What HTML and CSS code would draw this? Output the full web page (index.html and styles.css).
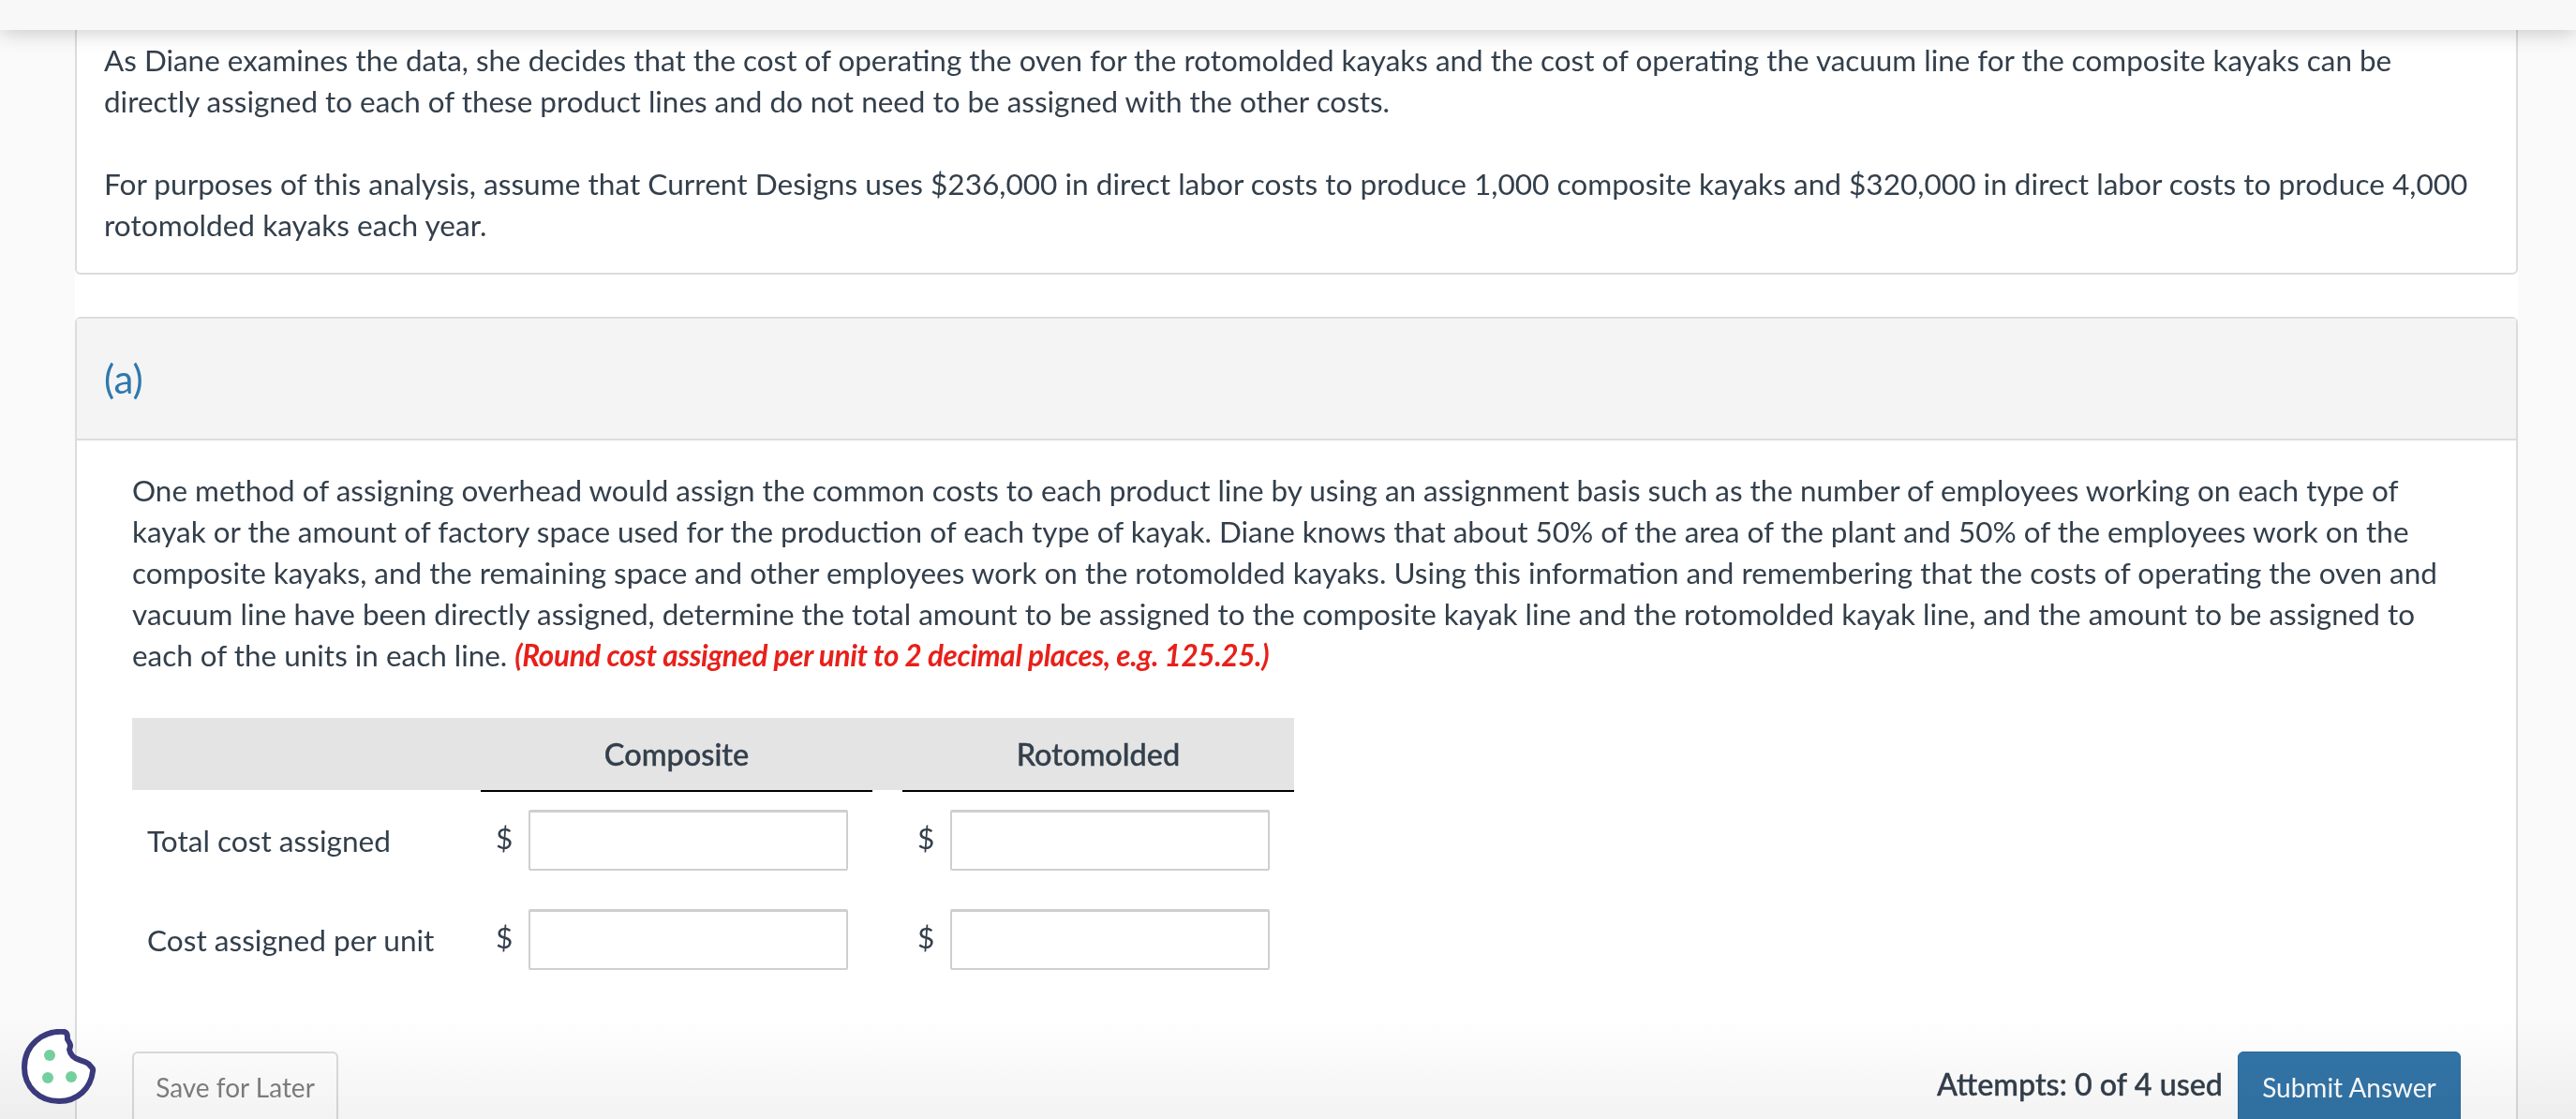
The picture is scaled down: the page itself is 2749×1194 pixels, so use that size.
FILE: index.html
```html
<!DOCTYPE html>
<html lang="en">
<head>
<meta charset="utf-8">
<title>Question</title>
<link rel="stylesheet" href="styles.css">
</head>
<body>
<header class="topbar"></header>
<main class="page">
  <section class="card intro">
    <p class="tight">As Diane examines the data, she decides that the cost of operating the oven for the rotomolded kayaks and the cost of operating the vacuum line for the composite kayaks can be directly assigned to each of these product lines and do not need to be assigned with the other costs.</p>
    <p>For purposes of this analysis, assume that Current Designs uses $236,000 in direct labor costs to produce 1,000 composite kayaks and $320,000 in direct labor costs to produce 4,000 rotomolded kayaks each year.</p>
  </section>
  <section class="card part">
    <div class="part-head"><h2>(a)</h2></div>
    <div class="part-body">
      <p class="prompt">One method of assigning overhead would assign the common costs to each product line by using an assignment basis such as the number of employees working on each type of kayak or the amount of factory space used for the production of each type of kayak. Diane knows that about 50% of the area of the plant and 50% of the employees work on the composite kayaks, and the remaining space and other employees work on the rotomolded kayaks. Using this information and remembering that the costs of operating the oven and vacuum line have been directly assigned, determine the total amount to be assigned to the composite kayak line and the rotomolded kayak line, and the amount to be assigned to each of the units in each line. <em class="hint">(Round cost assigned per unit to 2 decimal places, e.g. 125.25.)</em></p>
      <div class="grid">
        <div class="th th-blank"></div>
        <div class="th th-col">Composite</div>
        <div class="th th-gap"></div>
        <div class="th th-col">Rotomolded</div>
        <div class="row-label">Total cost assigned</div>
        <div class="money"><span class="cur">$</span><input class="field" type="text" aria-label="Total cost assigned, composite"></div>
        <div></div>
        <div class="money"><span class="cur">$</span><input class="field" type="text" aria-label="Total cost assigned, rotomolded"></div>
        <div class="row-label">Cost assigned per unit</div>
        <div class="money"><span class="cur">$</span><input class="field" type="text" aria-label="Cost assigned per unit, composite"></div>
        <div></div>
        <div class="money"><span class="cur">$</span><input class="field" type="text" aria-label="Cost assigned per unit, rotomolded"></div>
      </div>
      <div class="actions">
        <button class="btn btn-save" type="button">Save for Later</button>
        <div class="submit-group">
          <span class="attempts">Attempts: 0 of 4 used</span>
          <button class="btn btn-submit" type="button">Submit Answer</button>
        </div>
      </div>
    </div>
  </section>
</main>
<div class="fade"></div>
<svg class="cookie" viewBox="0 0 80 80" width="80" height="80" aria-hidden="true">
  <path d="M46 3 C23 1 3 17 3 41 C3 62 19 77 40 77 C60 77 74 63 76 45 C77 42 75 41 73 39 C71 35 67 35 62 33 C55 31 52 27 51 22 C53 17 52 16 49 11 C49 7 49 4 46 3 Z" fill="#fff" stroke="#3a3a7c" stroke-width="6" stroke-linejoin="round"/>
  <circle cx="30" cy="28" r="6" fill="#74cf9e"/>
  <circle cx="28" cy="52" r="6" fill="#74cf9e"/>
  <circle cx="53" cy="51" r="6" fill="#74cf9e"/>
</svg>
</body>
</html>
```
FILE: styles.css
```css
* { box-sizing: border-box; }
html, body { margin: 0; height: 1194px; overflow: hidden; }
body {
  background: #fafafa;
  font-family: Lato, "Open Sans", sans-serif;
  font-size: 31.6px;
  line-height: 44px;
  color: #333f4b;
  position: relative;
}
.topbar {
  height: 32px;
  background: #f8f8f8;
  box-shadow: 0 3px 22px rgba(0,0,0,.2);
  position: relative;
  z-index: 2;
}
.page {
  margin-left: 80px;
  width: 2607px;
  background: #fff;
}
.card {
  width: 2607px;
  border: 2px solid #dcdcdc;
  border-radius: 6px;
  background: #fff;
}
.intro {
  border-top: 0;
  border-radius: 0 0 6px 6px;
  padding: 10px 29px 31px;
  height: 261px;
}
.intro p { margin: 0 0 44px; }
.intro p:last-child { margin: 0; }
.intro .tight { font-size: 31.42px; }
.part { margin-top: 45px; }
.part-head {
  height: 130px;
  background: #f4f4f4;
  border-bottom: 2px solid #dcdcdc;
  display: flex;
  align-items: center;
  padding: 0 29px;
}
.part-head h2 {
  margin: 0;
  font-size: 42px;
  font-weight: 400;
  color: #2f78ad;
}
.part-body { padding: 31px 59px 0; }
.prompt { margin: 0; font-size: 31.45px; }
.hint { color: #e8201a; font-weight: 700; letter-spacing: -.35px; }
.grid {
  margin-top: 45px;
  display: grid;
  grid-template-columns: 372px 418px 32px 418px;
  grid-template-rows: 77px 106px 106px;
  width: 1240px;
}
.th { background: #e4e4e4; }
.th-col {
  border-bottom: 2px solid #000;
  height: 79px;
  text-align: center;
  font-weight: 500;
  font-size: 32.5px;
  line-height: 77px;
  color: #333f4b;
  -webkit-text-stroke: .4px #333f4b;
}
.row-label {
  display: flex;
  align-items: center;
  padding-left: 16px;
  padding-top: 1px;
}
.money {
  display: flex;
  align-items: center;
  padding-top: 1px;
}
.cur { width: 51px; padding-left: 16px; position: relative; top: -3px; }
.field {
  width: 341px;
  height: 65px;
  background: #fff;
  border: 2px solid #cfcfcf;
  border-top-width: 3px;
  border-radius: 2px;
}
.actions {
  margin-top: 67px;
  display: flex;
  justify-content: space-between;
  align-items: flex-start;
}
.btn {
  font-family: inherit;
  font-size: 28px;
  height: 80px;
  padding-bottom: 6px;
  border-radius: 6px;
}
.btn-save {
  width: 220px;
  background: #fff;
  border: 2px solid #dcdcdc;
  color: #808080;
}
.submit-group { display: flex; align-items: flex-start; gap: 16px; }
.attempts { font-size: 32.3px; font-weight: 500; -webkit-text-stroke: .4px #333f4b; line-height: 70px; }
.btn-submit {
  width: 238px;
  background: #3275a8;
  border: 1px solid #2a6a9c;
  color: #fff;
}
.fade {
  position: absolute;
  left: 0;
  right: 0;
  bottom: 0;
  height: 110px;
  background: linear-gradient(#fff, #f3f3f3);
  mix-blend-mode: multiply;
  pointer-events: none;
}
.cookie { position: absolute; left: 23px; top: 1098px; }
```
